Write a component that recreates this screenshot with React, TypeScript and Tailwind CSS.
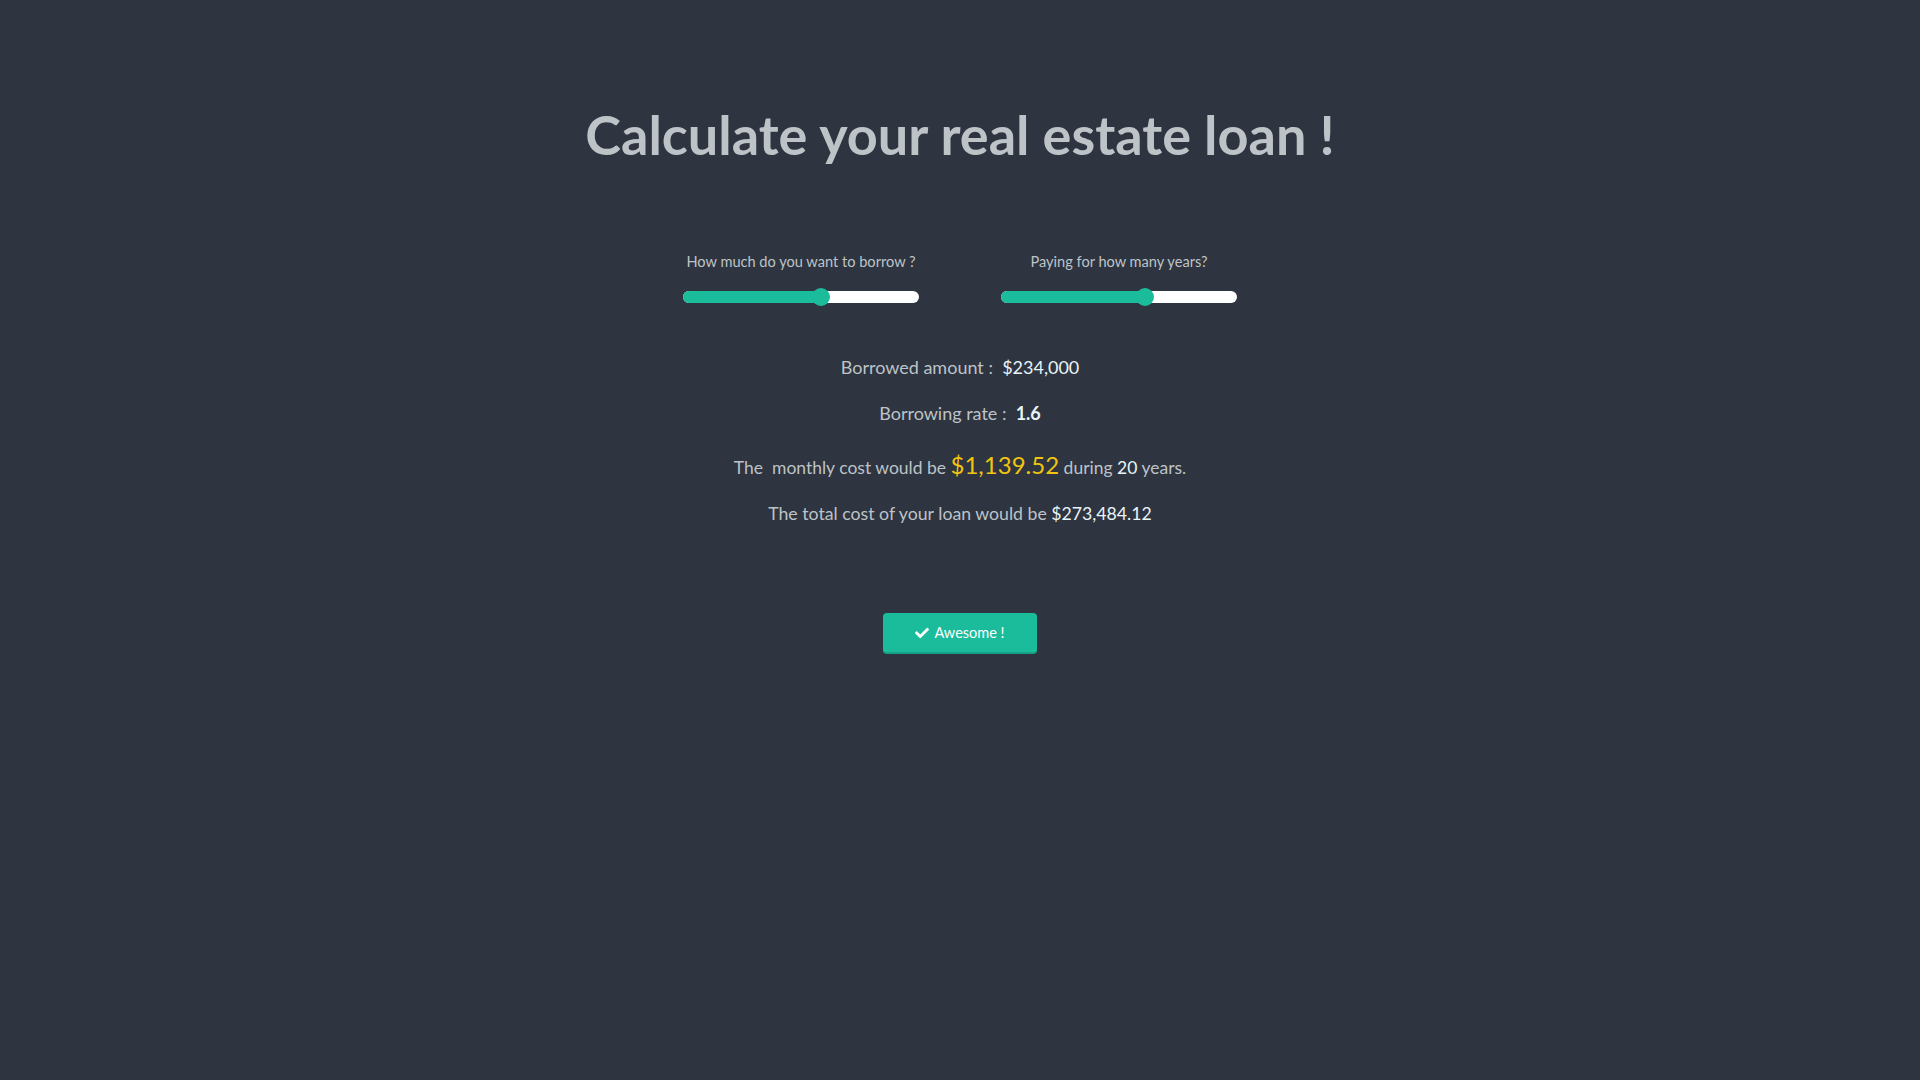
import React from "react";
import { FaCheck } from "react-icons/fa";

function Slider({ label, pct }: { label: string; pct: number }) {
  return (
    <div className="flex w-[236px] flex-col items-center">
      <div className="text-[14.6px] leading-[20px] text-[#bdc3c7]">{label}</div>
      <div className="relative mt-[16px] h-[18px] w-full">
        <div className="absolute left-0 right-0 top-[3px] h-[12px] rounded-full bg-white" />
        <div
          className="absolute left-0 top-[3px] h-[12px] rounded-l-full bg-[#1abc9c]"
          style={{ width: `${pct}%` }}
        />
        <div
          className="absolute top-0 h-[18px] w-[18px] -translate-x-1/2 rounded-full bg-[#1abc9c]"
          style={{ left: `${pct}%` }}
        />
      </div>
    </div>
  );
}

export default function App() {
  return (
    <div
      className="flex min-h-screen w-full flex-col items-center bg-[#2e3440] pt-[102px]"
      style={{ fontFamily: "Lato, 'Open Sans', sans-serif" }}
    >
      <h1 className="text-[54px] font-bold leading-[65px] text-[#bdc3c7]">
        Calculate your real estate loan !
      </h1>

      <div className="mt-[85px] flex gap-[82px]">
        <Slider label="How much do you want to borrow ?" pct={58.5} />
        <Slider label="Paying for how many years?" pct={61} />
      </div>

      <div className="mt-[47px] flex flex-col items-center text-[18px] text-[#bdc3c7]">
        <p className="h-[28px] leading-[28px]">
          Borrowed amount :&nbsp; <span className="text-[#e8f4f8]">$234,000</span>
        </p>
        <p className="mt-[18px] h-[28px] leading-[28px]">
          Borrowing rate :&nbsp; <span className="font-bold text-[#e8f4f8]">1.6</span>
        </p>
        <p className="mt-[24px] h-[28px] text-[17.5px] leading-[28px]">
          The&nbsp; monthly cost would be{" "}
          <span className="text-[24px] leading-[28px] text-[#f1c40f]">$1,139.52</span>{" "}
          during <span className="text-[#e8f4f8]">20</span> years.
        </p>
        <p className="mt-[21px] h-[28px] text-[17.7px] leading-[28px]">
          The total cost of your loan would be{" "}
          <span className="text-[#e8f4f8]">$273,484.12</span>
        </p>
      </div>

      <button className="mt-[85px] flex h-[41px] w-[154px] items-center justify-center gap-[5px] rounded-[4px] border-b-[2px] border-[#16a085] bg-[#1abc9c] text-[14.5px] text-white">
        <FaCheck className="h-[14px] w-[14px]" />
        <span>Awesome !</span>
      </button>
    </div>
  );
}
